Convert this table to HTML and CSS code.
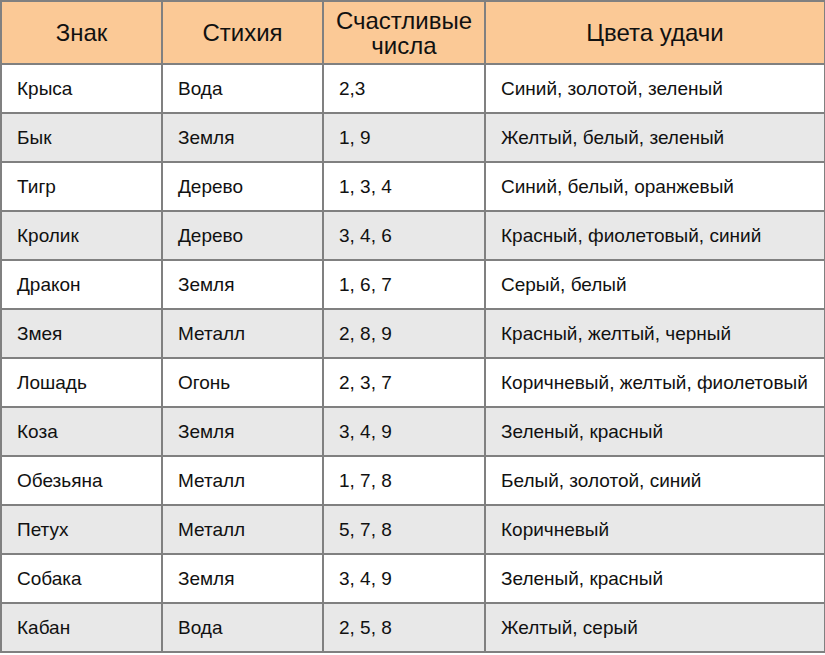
FILE: index.html
```html
<!DOCTYPE html>
<html>
<head>
<meta charset="utf-8">
<link rel="stylesheet" href="styles.css">
</head>
<body>
<table class="zodiac">
  <colgroup>
    <col class="c1"><col class="c2"><col class="c3"><col class="c4">
  </colgroup>
  <thead>
    <tr><th>Знак</th><th>Стихия</th><th>Счастливые<br>числа</th><th>Цвета удачи</th></tr>
  </thead>
  <tbody>
    <tr><td>Крыса</td><td>Вода</td><td>2,3</td><td>Синий, золотой, зеленый</td></tr>
    <tr><td>Бык</td><td>Земля</td><td>1, 9</td><td>Желтый, белый, зеленый</td></tr>
    <tr><td>Тигр</td><td>Дерево</td><td>1, 3, 4</td><td>Синий, белый, оранжевый</td></tr>
    <tr><td>Кролик</td><td>Дерево</td><td>3, 4, 6</td><td>Красный, фиолетовый, синий</td></tr>
    <tr><td>Дракон</td><td>Земля</td><td>1, 6, 7</td><td>Серый, белый</td></tr>
    <tr><td>Змея</td><td>Металл</td><td>2, 8, 9</td><td>Красный, желтый, черный</td></tr>
    <tr><td>Лошадь</td><td>Огонь</td><td>2, 3, 7</td><td>Коричневый, желтый, фиолетовый</td></tr>
    <tr><td>Коза</td><td>Земля</td><td>3, 4, 9</td><td>Зеленый, красный</td></tr>
    <tr><td>Обезьяна</td><td>Металл</td><td>1, 7, 8</td><td>Белый, золотой, синий</td></tr>
    <tr><td>Петух</td><td>Металл</td><td>5, 7, 8</td><td>Коричневый</td></tr>
    <tr><td>Собака</td><td>Земля</td><td>3, 4, 9</td><td>Зеленый, красный</td></tr>
    <tr><td>Кабан</td><td>Вода</td><td>2, 5, 8</td><td>Желтый, серый</td></tr>
  </tbody>
</table>
</body>
</html>
```
FILE: styles.css
```css
html, body {
  margin: 0;
  padding: 0;
  background: #ffffff;
}
.zodiac {
  border-collapse: collapse;
  table-layout: fixed;
  width: 824px;
  font-family: "Liberation Sans", Arial, sans-serif;
  color: #000;
}
.c1 { width: 161px; }
.c2 { width: 161px; }
.c3 { width: 162px; }
.c4 { width: 340px; }
.zodiac th, .zodiac td {
  border: 2px solid #808080;
  padding: 0;
}
.zodiac th {
  background: #fbc996;
  font-weight: normal;
  font-size: 24px;
  line-height: 25px;
  height: 61px;
  text-align: center;
  color: #111;
}
.zodiac td {
  height: 47px;
  font-size: 19px;
  padding-left: 15px;
  text-align: left;
  color: #111;
}
.zodiac tbody tr:nth-child(even) td {
  background: #e8e8e8;
}
```
